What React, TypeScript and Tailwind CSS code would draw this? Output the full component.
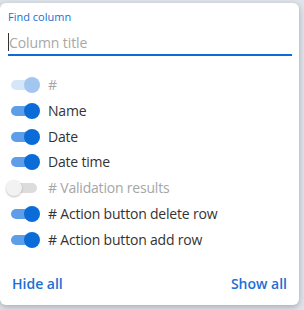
const columns = [
  { label: '#', on: true, disabled: true },
  { label: 'Name', on: true },
  { label: 'Date', on: true },
  { label: 'Date time', on: true },
  { label: '# Validation results', on: false, muted: true },
  { label: '# Action button delete row', on: true },
  { label: '# Action button add row', on: true },
];

function Toggle({ on, disabled }: { on: boolean; disabled?: boolean }) {
  const track = !on ? 'bg-[#dcdcdc]' : disabled ? 'bg-[#d6e6f9]' : 'bg-[#5e9de8]';
  const knob = !on
    ? 'bg-[#f2f2f2] left-[-5px] shadow-[0_1px_2px_rgba(0,0,0,0.25)]'
    : disabled
      ? 'bg-[#a3c6f1] left-[13px]'
      : 'bg-[#0b6cd8] left-[13px]';
  return (
    <div className="relative w-[26px] h-[10px] shrink-0">
      <div className={`absolute inset-0 rounded-full ${track}`} />
      <div className={`absolute top-[-3px] w-[16px] h-[16px] rounded-full ${knob}`} />
    </div>
  );
}

export default function App() {
  return (
    <div
      className="w-[304px] h-[310px] bg-[#dfe3ea] pt-[3px] pr-[5px] pb-[5px] overflow-hidden"
      style={{ fontFamily: '"Open Sans", "Noto Sans", sans-serif' }}
    >
      <div className="h-full bg-white rounded-md shadow-[0_2px_6px_rgba(0,0,0,0.25)] flex flex-col">
        <div className="px-[8px] pt-[7px]">
          <div className="text-[11px] leading-[14px] text-[#1a6fd6]">Find column</div>
          <div className="mt-[6px] h-[26px] flex items-center border-b-2 border-[#0b6cd8] w-[284px]">
            <span className="w-px h-[18px] bg-[#333]" />
            <span className="text-[14px] text-[#a8a8a8] tracking-[-0.1px]">Column title</span>
          </div>
        </div>
        <div className="mt-[21px] pl-[11px] flex flex-col gap-[9.8px]">
          {columns.map((c) => (
            <div key={c.label} className="flex items-center h-[16px]">
              <Toggle on={c.on} disabled={c.disabled} />
              <span
                className={`ml-[11px] text-[14px] leading-[16px] tracking-[-0.2px] ${
                  c.disabled || c.muted ? 'text-[#a6a6a6]' : 'text-[#333]'
                }`}
              >
                {c.label}
              </span>
            </div>
          ))}
        </div>
        <div className="mt-auto mb-[11px] px-[12px] flex justify-between text-[14px] font-semibold text-[#1a6fd6]">
          <span>Hide all</span>
          <span>Show all</span>
        </div>
      </div>
    </div>
  );
}
